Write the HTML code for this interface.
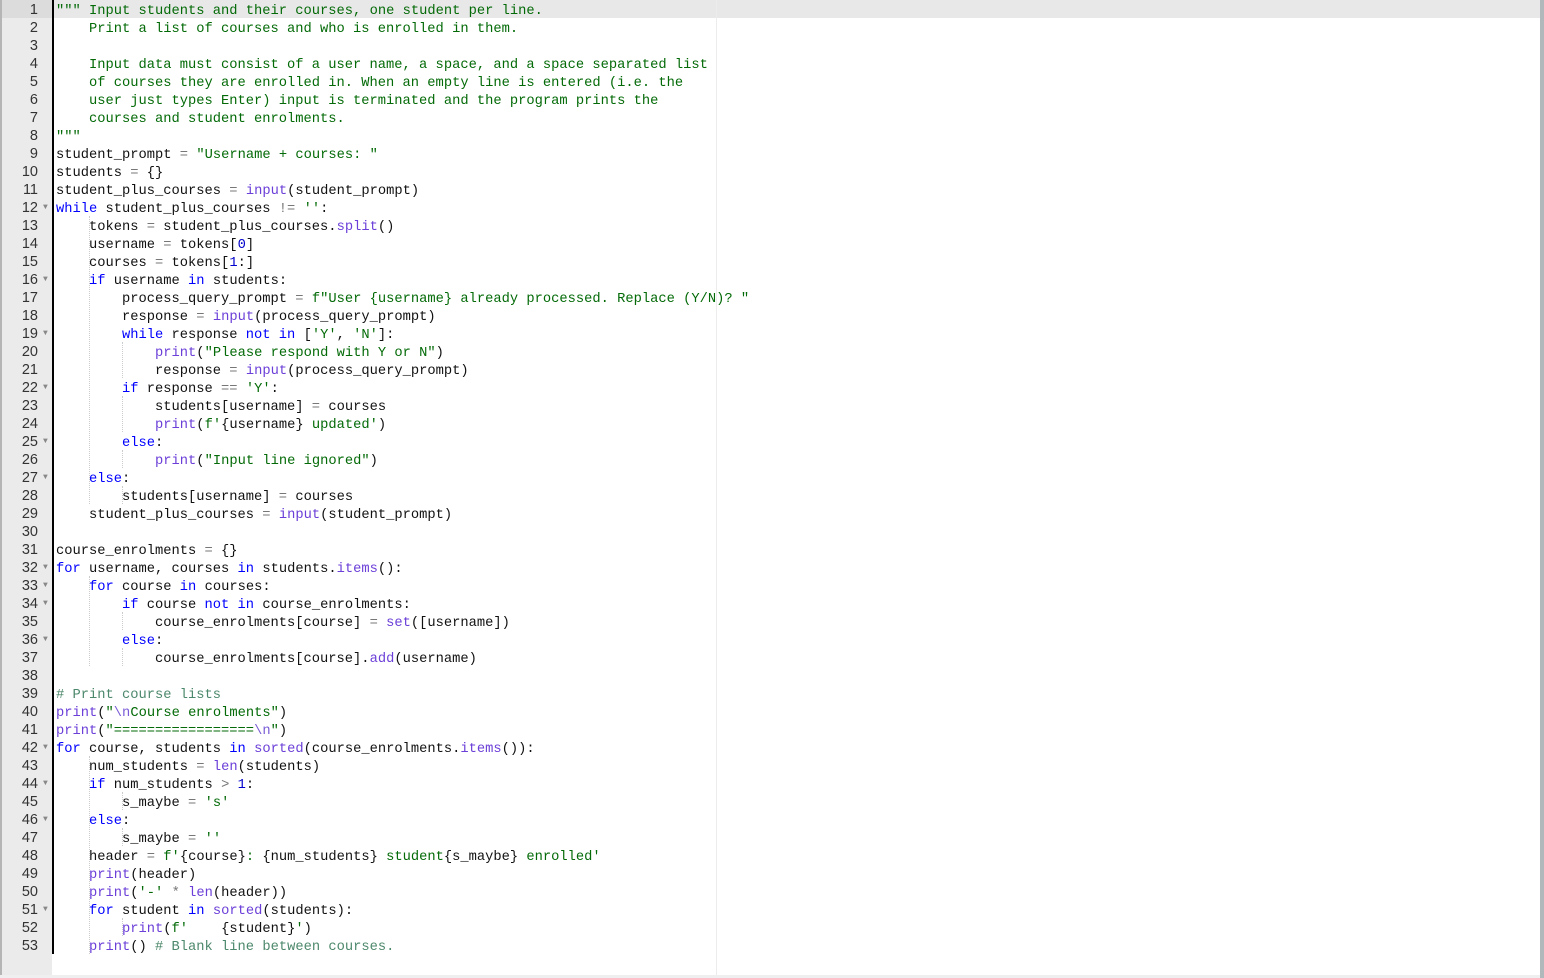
<!DOCTYPE html>
<html><head><meta charset="utf-8"><style>
html,body{margin:0;padding:0;width:1544px;height:978px;overflow:hidden;background:#fff}
#ed{position:absolute;left:0;top:0;width:1541px;height:975px;background:#fff;font-family:"Liberation Mono",monospace;font-size:13.75px}
#gut{position:absolute;left:0;top:0;width:52px;height:975px;background:#ebebeb;border-left:2px solid #b5b5b5;box-sizing:border-box}
#bar{position:absolute;left:52px;top:0;width:1.5px;height:954px;background:#000}
#rb{position:absolute;left:1540px;top:0;width:4px;height:978px;background:#b0b8bb}
#bb{position:absolute;left:0;top:975px;width:1540px;height:3px;background:#efefef}
#pm{position:absolute;left:716px;top:0;width:1px;height:975px;background:#ececec}
#al{position:absolute;left:53px;top:0;width:1487px;height:18px;background:#e8e8e8}
#ag{position:absolute;left:2px;top:0;width:50px;height:18px;background:#dcdcdc}
.ln{position:absolute;left:0;width:38px;text-align:right;color:#333;height:18px;line-height:18px;font-family:"Liberation Sans",sans-serif;font-size:14.5px}
.fa{position:absolute;left:43px;color:#888;font-size:8px;line-height:18px;height:18px}
pre{position:absolute;left:56px;top:3px;margin:0;font:inherit;line-height:18px;color:#111;white-space:pre}
.k{color:#0000ff}.s{color:#036a07}.c{color:#4c886b}.f{color:#6b3fd8}.n{color:#0000cd}.o{color:#777}.e{color:#7a5cd6}
.g{position:absolute;width:0;border-left:1px dotted #ccc}
</style></head><body>
<div id="ed">
<div id="gut"></div><div id="ag"></div><div id="al"></div><div id="pm"></div><div id="bar"></div>
<div id="nums"></div>
<div class="g" style="left:89px;top:216px;height:288px"></div>
<div class="g" style="left:122px;top:342px;height:36px"></div>
<div class="g" style="left:122px;top:396px;height:36px"></div>
<div class="g" style="left:122px;top:450px;height:18px"></div>
<div class="g" style="left:122px;top:486px;height:18px"></div>
<div class="g" style="left:89px;top:576px;height:90px"></div>
<div class="g" style="left:122px;top:612px;height:18px"></div>
<div class="g" style="left:122px;top:648px;height:18px"></div>
<div class="g" style="left:89px;top:756px;height:198px"></div>
<div class="g" style="left:122px;top:792px;height:18px"></div>
<div class="g" style="left:122px;top:828px;height:18px"></div>
<div class="g" style="left:122px;top:918px;height:18px"></div>
<pre><span class="s">"""</span><span class="s"> Input students and their courses, one student per line.
    Print a list of courses and who is enrolled in them.

    Input data must consist of a user name, a space, and a space separated list
    of courses they are enrolled in. When an empty line is entered (i.e. the
    user just types Enter) input is terminated and the program prints the
    courses and student enrolments.
"""</span>
student_prompt <span class="o">=</span> <span class="s">"Username + courses: "</span>
students <span class="o">=</span> {}
student_plus_courses <span class="o">=</span> <span class="f">input</span>(student_prompt)
<span class="k">while</span> student_plus_courses <span class="o">!=</span> <span class="s">''</span>:
    tokens <span class="o">=</span> student_plus_courses.<span class="f">split</span>()
    username <span class="o">=</span> tokens[<span class="n">0</span>]
    courses <span class="o">=</span> tokens[<span class="n">1</span>:]
    <span class="k">if</span> username <span class="k">in</span> students:
        process_query_prompt <span class="o">=</span> <span class="s">f"User {username} already processed. Replace (Y/N)? "</span>
        response <span class="o">=</span> <span class="f">input</span>(process_query_prompt)
        <span class="k">while</span> response <span class="k">not in</span> [<span class="s">'Y'</span>, <span class="s">'N'</span>]:
            <span class="f">print</span>(<span class="s">"Please respond with Y or N"</span>)
            response <span class="o">=</span> <span class="f">input</span>(process_query_prompt)
        <span class="k">if</span> response <span class="o">==</span> <span class="s">'Y'</span>:
            students[username] <span class="o">=</span> courses
            <span class="f">print</span>(<span class="s">f'</span>{username}<span class="s"> updated'</span>)
        <span class="k">else</span>:
            <span class="f">print</span>(<span class="s">"Input line ignored"</span>)
    <span class="k">else</span>:
        students[username] <span class="o">=</span> courses
    student_plus_courses <span class="o">=</span> <span class="f">input</span>(student_prompt)

course_enrolments <span class="o">=</span> {}
<span class="k">for</span> username, courses <span class="k">in</span> students.<span class="f">items</span>():
    <span class="k">for</span> course <span class="k">in</span> courses:
        <span class="k">if</span> course <span class="k">not in</span> course_enrolments:
            course_enrolments[course] <span class="o">=</span> <span class="f">set</span>([username])
        <span class="k">else</span>:
            course_enrolments[course].<span class="f">add</span>(username)

<span class="c"># Print course lists</span>
<span class="f">print</span>(<span class="s">"</span><span class="e">\n</span><span class="s">Course enrolments"</span>)
<span class="f">print</span>(<span class="s">"=================</span><span class="e">\n</span><span class="s">"</span>)
<span class="k">for</span> course, students <span class="k">in</span> <span class="f">sorted</span>(course_enrolments.<span class="f">items</span>()):
    num_students <span class="o">=</span> <span class="f">len</span>(students)
    <span class="k">if</span> num_students <span class="o">&gt;</span> <span class="n">1</span>:
        s_maybe <span class="o">=</span> <span class="s">'s'</span>
    <span class="k">else</span>:
        s_maybe <span class="o">=</span> <span class="s">''</span>
    header <span class="o">=</span> <span class="s">f'</span>{course}<span class="s">: </span>{num_students}<span class="s"> student</span>{s_maybe}<span class="s"> enrolled'</span>
    <span class="f">print</span>(header)
    <span class="f">print</span>(<span class="s">'-'</span> <span class="o">*</span> <span class="f">len</span>(header))
    <span class="k">for</span> student <span class="k">in</span> <span class="f">sorted</span>(students):
        <span class="f">print</span>(<span class="s">f'    </span>{student}<span class="s">'</span>)
    <span class="f">print</span>() <span class="c"># Blank line between courses.</span></pre>
</div>
<div id="rb"></div><div id="bb"></div>
<script>
var h='',folds=[12,16,19,22,25,27,32,33,34,36,42,44,46,51];
for(var i=1;i<=53;i++){h+='<div class="ln" style="top:'+((i-1)*18+1)+'px">'+i+'</div>';
if(folds.indexOf(i)>=0)h+='<div class="fa" style="top:'+((i-1)*18+1)+'px">&#9660;</div>';}
document.getElementById('nums').innerHTML=h;
</script>
</body></html>
